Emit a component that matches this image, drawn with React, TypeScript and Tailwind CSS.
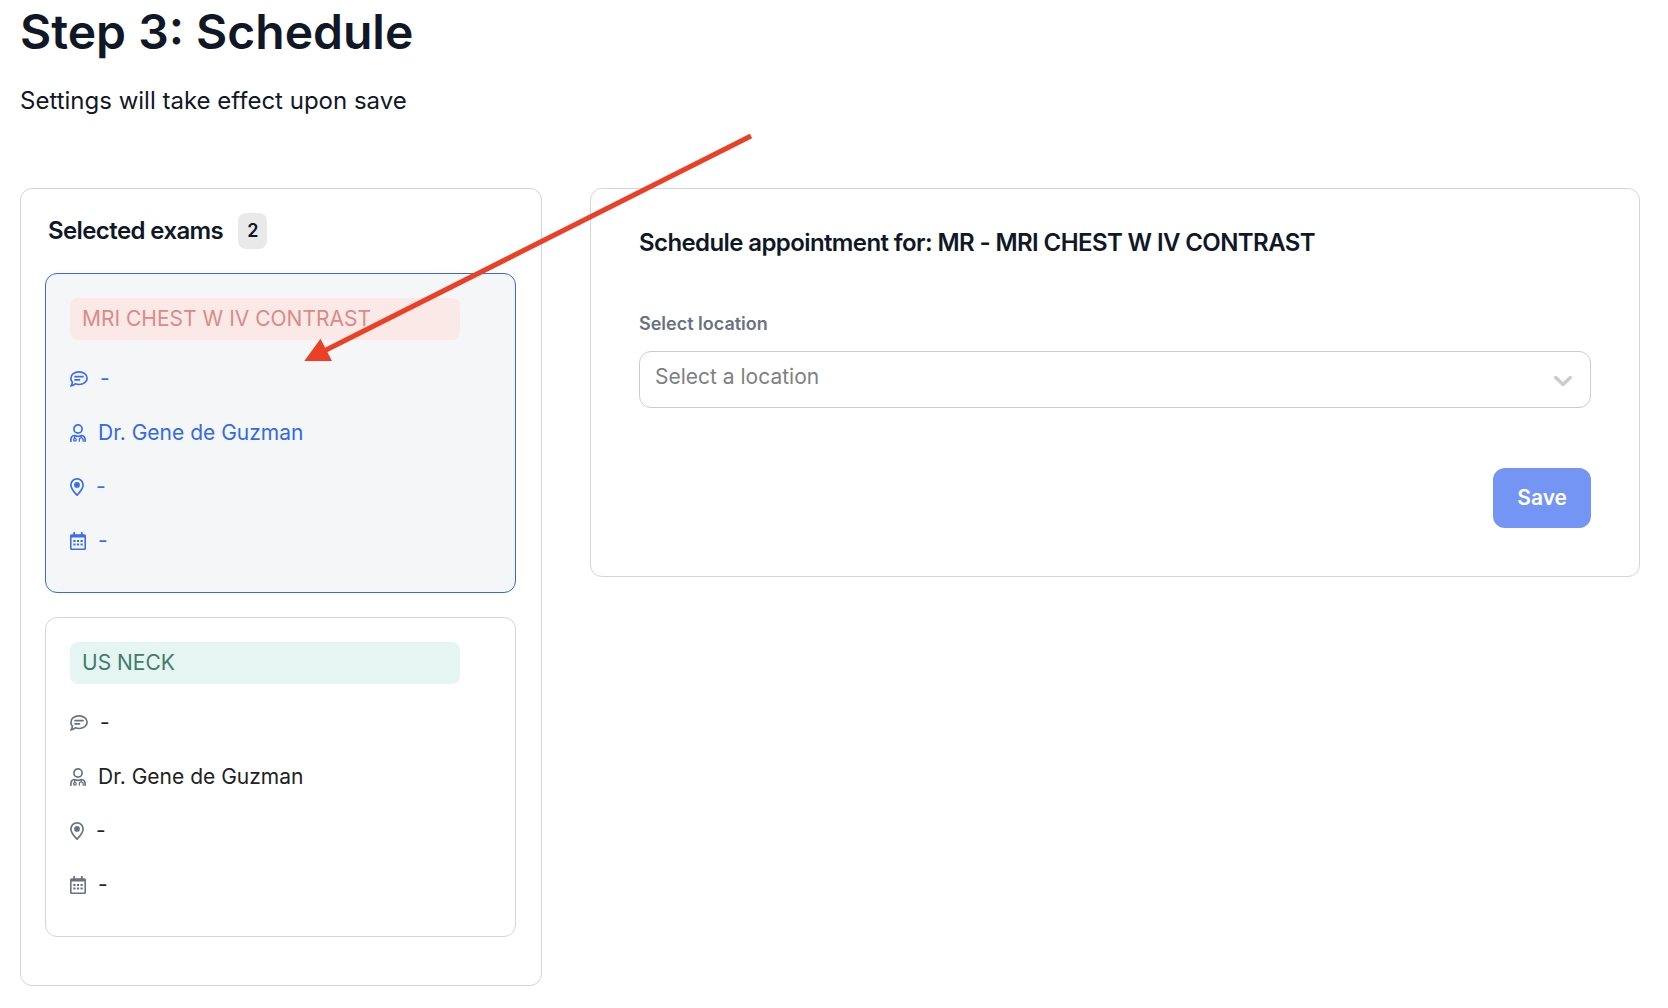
import { useState } from 'react';
import type { ReactNode } from 'react';
import clsx from 'clsx';

interface Exam {
    id: number;
    modality: string;
    name: string;
    tagClass: string;
    comment: string;
    doctor: string;
    location: string;
    date: string;
}

const exams: Exam[] = [
    {
        id: 1,
        modality: 'MR',
        name: 'MRI CHEST W IV CONTRAST',
        tagClass: 'bg-[#fbe9e7] text-[#dc8a87]',
        comment: '-',
        doctor: 'Dr. Gene de Guzman',
        location: '-',
        date: '-',
    },
    {
        id: 2,
        modality: 'US',
        name: 'US NECK',
        tagClass: 'bg-[#e5f5f1] text-[#417c6b]',
        comment: '-',
        doctor: 'Dr. Gene de Guzman',
        location: '-',
        date: '-',
    },
];

function CommentIcon() {
    return (
        <svg className="w-[18px] h-4" viewBox="0 0 18 16" fill="none" stroke="currentColor" strokeWidth="1.7" strokeLinecap="round" strokeLinejoin="round" aria-hidden="true">
            <path d="M9 .9c4.600 0 8.100 2.700 8.100 6.300s-3.500 6.300-8.100 6.300c-1.300 0-2.600-.3-3.700-.7-1.100.9-2.600 1.900-4.400 2.200.8-1.100 1.400-2.500 1.500-3.800C1.400 10.200.9 8.800.9 7.200.9 3.600 4.400.9 9 .9Z" />
            <path d="M5 5.700h8M5 8.800h4.500" />
        </svg>
    );
}

function DoctorIcon() {
    return (
        <svg className="w-4 h-[18px]" viewBox="0 0 16 18" fill="none" stroke="currentColor" strokeWidth="1.700" strokeLinecap="round" aria-hidden="true">
            <circle cx="8" cy="5" r="4.100" />
            <path d="M.9 17.200v-1.500c0-2.300 1.600-4 3.600-4.200 1.100.6 2.200.9 3.500.9s2.400-.3 3.500-.9c2 .2 3.600 1.900 3.600 4.200v1.500" />
            <path d="M4.700 12v2.200M11.200 12v1.700M9.300 17.200v-1.400c0-1.200.8-2 1.900-2s1.900.8 1.900 2v1.400" strokeWidth="1.300" />
            <circle cx="4.900" cy="15.700" r="1.300" strokeWidth="1.300" />
        </svg>
    );
}

function PinIcon() {
    return (
        <svg className="w-3.5 h-[18px]" viewBox="0 0 14 18" fill="none" stroke="currentColor" strokeWidth="1.700" strokeLinejoin="round" aria-hidden="true">
            <path d="M7 .9c3.500 0 6.100 2.600 6.100 6 0 2.900-3.300 7.300-6.100 10.200C4.200 14.200.9 9.800.9 6.900.9 3.500 3.500.9 7 .9Z" />
            <circle cx="7" cy="6.900" r="2.900" fill="currentColor" stroke="none" />
        </svg>
    );
}

function CalendarIcon() {
    return (
        <svg className="w-4 h-[18px]" viewBox="0 0 16 18" fill="currentColor" aria-hidden="true">
            <path fillRule="evenodd" d="M3.300.6a.9.9 0 0 1 1.800 0v1.600h5.800V.6a.9.9 0 0 1 1.800 0v1.600h1.800A1.500 1.500 0 0 1 16 3.700v12.800a1.500 1.500 0 0 1-1.500 1.500h-13A1.500 1.500 0 0 1 0 16.500V3.700a1.500 1.500 0 0 1 1.500-1.500h1.800V.6ZM1.600 5.600v10.500c0 .2.100.3.300.3h12.200c.2 0 .3-.1.300-.3V5.600H1.600Z" />
            <path d="M3.300 7.900h2.200v2H3.300zM6.900 7.900h2.200v2H6.900zM10.500 7.900h2.200v2h-2.200zM3.300 11.500h2.200v2H3.300zM6.900 11.500h2.200v2H6.900zM10.500 11.500h2.200v2h-2.200z" />
        </svg>
    );
}

function DetailRow({ icon, active, children }: { icon: ReactNode; active: boolean; children: ReactNode }) {
    return (
        <span className="flex h-[30px] items-center gap-3">
            <span className={active ? 'text-[#3b6cf0]' : 'text-gray-500'}>{icon}</span>
            <span className={active ? 'text-[#3469e8]' : 'text-[#222222]'}>{children}</span>
        </span>
    );
}

interface ExamCardProps {
    exam: Exam;
    active: boolean;
    onSelect: () => void;
}

function ExamCard({ exam, active, onSelect }: ExamCardProps) {
    return (
        <button
            type="button"
            aria-pressed={active}
            onClick={onSelect}
            className={clsx(
                'block w-full rounded-xl border px-6 pt-6 pb-9 text-left text-[21px] leading-[30px]',
                active ? 'border-[#3469e8] bg-[#f4f6f8]' : 'border-gray-300 bg-white'
            )}
        >
            <span className={clsx('mr-[31px] block rounded-lg px-3 py-1.5', exam.tagClass)}>{exam.name}</span>
            <span className="mt-6 flex flex-col gap-6">
                <DetailRow icon={<CommentIcon />} active={active}>{exam.comment}</DetailRow>
                <DetailRow icon={<DoctorIcon />} active={active}>{exam.doctor}</DetailRow>
                <DetailRow icon={<PinIcon />} active={active}>{exam.location}</DetailRow>
                <DetailRow icon={<CalendarIcon />} active={active}>{exam.date}</DetailRow>
            </span>
        </button>
    );
}

function PointerArrow() {
    return (
        <svg className="pointer-events-none absolute top-[132px] left-[304px] h-[232px] w-[452px]" viewBox="304 132 452 232" aria-hidden="true">
            <path d="M751 136 325 350.500" stroke="#ea4126" strokeWidth="5" />
            <path d="M304.300 361 320.500 338.700 332 361Z" fill="#ea4126" />
        </svg>
    );
}

export default function App() {
    const [selectedId, setSelectedId] = useState(1);
    const selected = exams.find((exam) => exam.id === selectedId) || exams[0];

    return (
        <main className="relative bg-white pt-1 pr-7 pb-5 pl-5 font-['Inter',sans-serif] text-gray-900">
            <h1 className="text-5xl leading-[56px] font-semibold">Step 3: Schedule</h1>
            <p className="mt-6 text-2xl leading-[34px]">Settings will take effect upon save</p>

            <div className="mt-[70px] grid grid-cols-[87fr_175fr] items-start gap-12">
                <section className="rounded-xl border border-gray-300 pt-6 pr-[25px] pb-12 pl-6">
                    <div className="flex items-center gap-[15px] px-[3px]">
                        <h2 className="text-2xl leading-9 font-semibold tracking-tight">Selected exams</h2>
                        <span className="rounded-lg bg-[#e9e9e9] px-[9px] text-lg leading-9 font-semibold">{exams.length}</span>
                    </div>
                    <div className="mt-6 flex flex-col gap-6">
                        {exams.map((exam) => (
                            <ExamCard
                                key={exam.id}
                                exam={exam}
                                active={exam.id === selectedId}
                                onSelect={() => setSelectedId(exam.id)}
                            />
                        ))}
                    </div>
                </section>

                <section className="rounded-xl border border-gray-300 px-12 pt-9 pb-12">
                    <h2 className="text-2xl leading-9 font-semibold tracking-tight">
                        Schedule appointment for: {selected.modality} - {selected.name}
                    </h2>
                    <form onSubmit={(e) => e.preventDefault()}>
                        <label htmlFor="location" className="mt-[51px] block text-lg leading-6 font-semibold text-gray-500">
                            Select location
                        </label>
                        <div className="relative mt-[15px]">
                            <select
                                id="location"
                                defaultValue=""
                                className="block h-[57px] w-full appearance-none rounded-xl border border-[#cccccc] bg-white pr-12 pb-1.5 pl-[15px] text-[21px] text-[#808080]"
                            >
                                <option value="">Select a location</option>
                            </select>
                            <svg className="pointer-events-none absolute top-6 right-[18px] h-3 w-5" viewBox="0 0 20 12" fill="none" stroke="#cccccc" strokeWidth="3.500" strokeLinecap="round" strokeLinejoin="round" aria-hidden="true">
                                <path d="m2.700 2.500 7.300 6.900 7.300-6.900" />
                            </svg>
                        </div>
                        <div className="mt-[60px] flex justify-end">
                            <button type="submit" className="h-[60px] rounded-xl bg-[#7495f3] px-6 text-[21px] font-semibold text-white">
                                Save
                            </button>
                        </div>
                    </form>
                </section>
            </div>

            <PointerArrow />
        </main>
    );
}
